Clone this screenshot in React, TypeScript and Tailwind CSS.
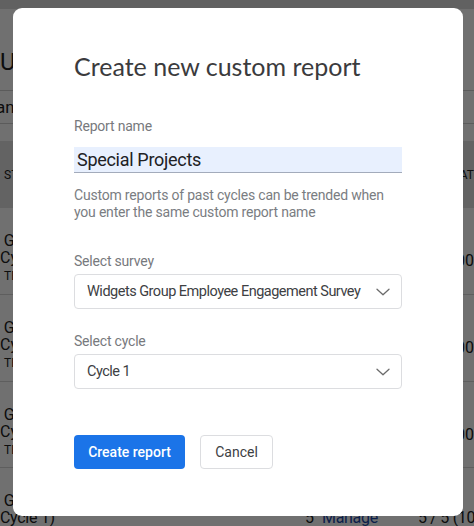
import React from "react";

const rows = [0, 1, 2];

const Chevron = () => (
    <svg width="14" height="8" viewBox="0 0 14 8" fill="none" className="shrink-0">
        <path
            d="M1 1.2 7 6.8 13 1.2"
            stroke="#6b6b6b"
            strokeWidth="1.3"
            strokeLinecap="round"
            strokeLinejoin="round"
        />
    </svg>
);

const SelectBox = ({ value }: { value: string }) => (
    <div className="mt-[3px] flex h-[35px] w-[328px] shrink-0 items-center justify-between overflow-hidden rounded-[4px] border border-[#dcdde0] bg-white pl-[12px] pr-[11px]">
        <span className="min-w-0 whitespace-nowrap text-[14.5px] leading-[20px] tracking-[-0.5px] text-[#3d4043]">
            {value}
        </span>
        <Chevron />
    </div>
);

const labelCls =
    "block h-[20px] shrink-0 text-[14px] leading-[20px] tracking-[-0.2px] text-[#77797d]";

const BackgroundPage = () => (
    <div className="flex h-full flex-col bg-[#f3f3f3] text-[#202020]">
        <div className="h-[9px] bg-[#dcdcdc]" />
        <div className="flex h-[83px] items-end border-b border-[#d0d0d0] bg-white pb-[14px]">
            <span className="text-[24px] leading-[28px]">U</span>
        </div>
        <div className="flex h-[33px] items-center border-b border-[#d0d0d0] bg-white">
            <span className="-ml-[4px] text-[17px]">an</span>
        </div>
        <div className="h-[17px] bg-white" />
        <div className="flex h-[68px] items-center justify-between bg-[#e2e2e2] text-[12px] uppercase">
            <span className="pl-[4px]">St</span>
            <span>At</span>
        </div>
        {rows.map((r) => (
            <div
                key={r}
                className="flex h-[87px] items-start justify-between border-b border-[#d6d6d6] bg-white pt-[24px]"
            >
                <div className="flex flex-col leading-[17px]">
                    <span className="-ml-[4px] text-[16px]">: G</span>
                    <span className="text-[16px]">Cy</span>
                    <span className="pl-[4px] pt-[2px] text-[12px]">TE</span>
                </div>
                <span className="pt-[17px] text-[16px]">00</span>
            </div>
        ))}
        <div className="flex flex-col bg-white pt-[24px] leading-[17px]">
            <span className="-ml-[4px] text-[16px]">: G</span>
            <div className="flex items-center text-[16px] tracking-[-0.3px]">
                <span className="flex-1">Cycle 1)</span>
                <span className="w-[17px]">5</span>
                <span className="w-[96px] text-[#1a47a8]">Manage</span>
                <span className="w-[56px] whitespace-nowrap">5 / 5 (100</span>
            </div>
        </div>
    </div>
);

export default function App() {
    return (
        <div
            className="relative h-[526px] w-[474px] overflow-hidden"
            style={{ fontFamily: "Roboto, 'Liberation Sans', sans-serif" }}
        >
            <BackgroundPage />
            <div className="absolute inset-0 bg-black/[0.56]" />

            <div className="absolute left-[13px] top-[8px] flex h-[508px] w-[450px] flex-col rounded-[9px] bg-white pl-[61px] pt-[43px]">
                <h2
                    className="h-[30px] shrink-0 text-[25px] leading-[30px] text-[#3b3b3d]"
                    style={{ fontFamily: "Lato, 'Open Sans', sans-serif" }}
                >
                    Create new custom report
                </h2>

                <span className={`mt-[35px] ${labelCls}`}>Report name</span>
                <div className="mt-[11px] flex h-[26px] w-[328px] shrink-0 items-center border-b-[1.5px] border-[#a3abbb] bg-[#e8f0fe] pl-[3px]">
                    <span className="text-[18px] tracking-[-0.3px] text-[#202124]">
                        Special Projects
                    </span>
                </div>
                <p className="mt-[14px] h-[34px] w-[330px] shrink-0 text-[14px] leading-[17px] tracking-[-0.2px] text-[#7a7d82]">
                    Custom reports of past cycles can be trended when you
                    enter the same custom report name
                </p>

                <span className={`mt-[30px] ${labelCls}`}>Select survey</span>
                <SelectBox value="Widgets Group Employee Engagement Survey" />

                <span className={`mt-[22px] ${labelCls}`}>Select cycle</span>
                <SelectBox value="Cycle 1" />

                <div className="mt-[46px] flex shrink-0 gap-[15px]">
                    <button className="h-[34px] w-[111px] rounded-[4px] bg-[#1b74e8] text-[14px] font-medium text-white">
                        Create report
                    </button>
                    <button className="h-[34px] w-[73px] rounded-[4px] border border-[#dcdde0] bg-white text-[14px] text-[#3d4043]">
                        Cancel
                    </button>
                </div>
            </div>
        </div>
    );
}
